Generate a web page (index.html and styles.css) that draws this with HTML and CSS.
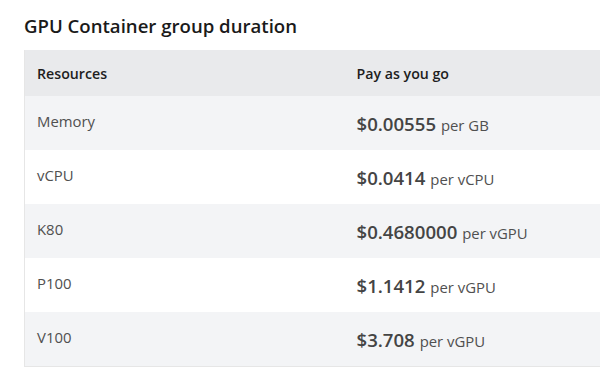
FILE: index.html
```html
<!DOCTYPE html>
<html>
<head>
<meta charset="utf-8">
<link rel="stylesheet" href="styles.css">
</head>
<body>
<div class="page">
  <h3 class="title">GPU Container group duration</h3>
  <table class="pricing">
    <thead>
      <tr><th class="col-res">Resources</th><th>Pay as you go</th></tr>
    </thead>
    <tbody>
      <tr><td class="col-res">Memory</td><td><span class="price">$0.00555</span> <span class="unit">per GB</span></td></tr>
      <tr><td class="col-res">vCPU</td><td><span class="price">$0.0414</span> <span class="unit">per vCPU</span></td></tr>
      <tr><td class="col-res">K80</td><td><span class="price">$0.4680000</span> <span class="unit">per vGPU</span></td></tr>
      <tr><td class="col-res">P100</td><td><span class="price">$1.1412</span> <span class="unit">per vGPU</span></td></tr>
      <tr><td class="col-res">V100</td><td><span class="price">$3.708</span> <span class="unit">per vGPU</span></td></tr>
    </tbody>
  </table>
</div>
</body>
</html>
```
FILE: styles.css
```css
html, body { margin: 0; padding: 0; background: #fff; }
body { font-family: "Open Sans", "Noto Sans", sans-serif; color: #505050; }
.page { padding: 13px 0 0 24px; width: 700px; }
.title {
  margin: 0 0 11px 0;
  font-size: 18.6px;
  font-weight: 600;
  color: #1a1a1a;
  line-height: 26px;
}
.pricing {
  border-collapse: collapse;
  table-layout: fixed;
  width: 640px;
  border-left: 1px solid #e6e6e6;
  border-bottom: 1px solid #e6e6e6;
}
.pricing th, .pricing td { box-sizing: border-box; }
.pricing thead tr { height: 46px; }
.pricing th {
  background: #e9eaec;
  color: #1e1e1e;
  font-size: 14.2px;
  font-weight: 600;
  text-align: left;
  padding: 0 12px;
  vertical-align: middle;
}
.pricing tbody tr { height: 54px; }
.pricing td {
  padding: 15px 12px 0 12px;
  font-size: 14.9px;
  line-height: 20px;
  vertical-align: top;
}
.pricing .col-res { width: 320px; }
.pricing tbody tr:nth-child(odd) td { background: #f3f4f6; }
.pricing tbody tr:nth-child(even) td { background: #ffffff; }
.price { font-size: 18.6px; line-height: 25px; font-weight: 600; color: #444; margin-right: 1px; }
.unit { font-size: 14.9px; color: #505050; }
```
